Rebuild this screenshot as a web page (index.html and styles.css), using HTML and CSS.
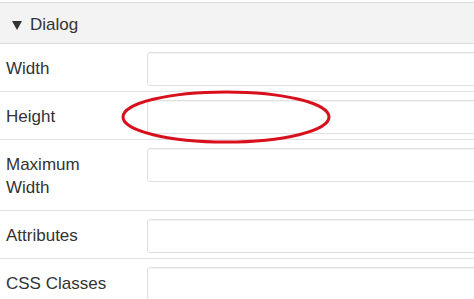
FILE: index.html
```html
<!DOCTYPE html>
<html>
<head>
<meta charset="utf-8">
<link rel="stylesheet" href="styles.css">
</head>
<body>
<div class="panel">
  <div class="header">
    <span class="caret"></span>
    <span class="title">Dialog</span>
  </div>
  <div class="row">
    <div class="label">Width</div>
    <div class="field"><div class="input"></div></div>
  </div>
  <div class="row">
    <div class="label">Height</div>
    <div class="field"><div class="input"></div></div>
  </div>
  <div class="row">
    <div class="label">Maximum Width</div>
    <div class="field"><div class="input"></div></div>
  </div>
  <div class="row">
    <div class="label">Attributes</div>
    <div class="field"><div class="input"></div></div>
  </div>
  <div class="row">
    <div class="label">CSS Classes</div>
    <div class="field"><div class="input"></div></div>
  </div>
  <svg class="mark" width="214" height="56" viewBox="0 0 214 56">
    <ellipse cx="107" cy="28" rx="103" ry="25" fill="none" stroke="#d8101c" stroke-width="3"/>
  </svg>
</div>
</body>
</html>
```
FILE: styles.css
```css
html, body {
  margin: 0;
  padding: 0;
  background: #fff;
  overflow: hidden;
}
body {
  width: 474px;
  height: 299px;
  font-family: "Helvetica Neue", Helvetica, "Liberation Sans", Arial, sans-serif;
  color: #333;
  font-size: 17px;
}
.panel {
  position: relative;
  padding-top: 2px;
}
.header {
  display: flex;
  align-items: center;
  height: 40px;
  box-sizing: border-box;
  padding-top: 3px;
  background: #f3f3f3;
  border-top: 1px solid #dcdcdc;
  border-bottom: 1px solid #dcdcdc;
  padding-left: 12px;
  height: 42px;
}
.caret {
  width: 0;
  height: 0;
  border-left: 5px solid transparent;
  border-right: 5px solid transparent;
  border-top: 9px solid #333;
  margin-right: 8px;
  margin-top: 1px;
}
.title {
  font-size: 17px;
  line-height: 20px;
}
.row {
  display: flex;
  border-bottom: 1px solid #e2e2e2;
}
.label {
  width: 147px;
  box-sizing: border-box;
  padding: 13px 28px 11px 6px;
  line-height: 23px;
  flex-shrink: 0;
}
.field {
  flex: 1;
  padding-top: 8px;
  overflow: visible;
}
.input {
  width: 340px;
  height: 32px;
  border: 1px solid #dfdfdf;
  border-radius: 3px;
  box-shadow: inset 0 1px 1px rgba(0,0,0,0.04);
  background: #fff;
}
.mark {
  position: absolute;
  left: 119px;
  top: 89px;
}
```
